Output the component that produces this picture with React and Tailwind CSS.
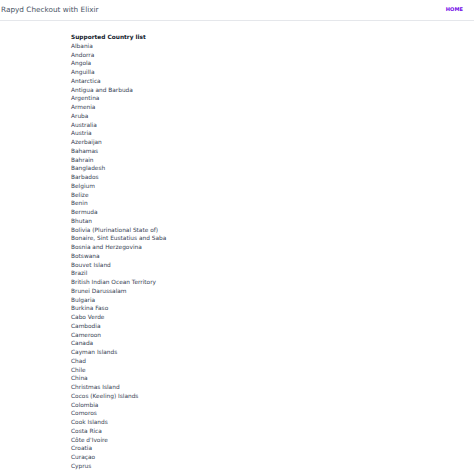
import React from "react";

const countries = [
  "Albania",
  "Andorra",
  "Angola",
  "Anguilla",
  "Antarctica",
  "Antigua and Barbuda",
  "Argentina",
  "Armenia",
  "Aruba",
  "Australia",
  "Austria",
  "Azerbaijan",
  "Bahamas",
  "Bahrain",
  "Bangladesh",
  "Barbados",
  "Belgium",
  "Belize",
  "Benin",
  "Bermuda",
  "Bhutan",
  "Bolivia (Plurinational State of)",
  "Bonaire, Sint Eustatius and Saba",
  "Bosnia and Herzegovina",
  "Botswana",
  "Bouvet Island",
  "Brazil",
  "British Indian Ocean Territory",
  "Brunei Darussalam",
  "Bulgaria",
  "Burkina Faso",
  "Cabo Verde",
  "Cambodia",
  "Cameroon",
  "Canada",
  "Cayman Islands",
  "Chad",
  "Chile",
  "China",
  "Christmas Island",
  "Cocos (Keeling) Islands",
  "Colombia",
  "Comoros",
  "Cook Islands",
  "Costa Rica",
  "Côte d'Ivoire",
  "Croatia",
  "Curaçao",
  "Cyprus",
];

export default function App() {
  return (
    <div className="h-screen overflow-hidden bg-white font-['DejaVu_Sans',sans-serif]">
      <header className="h-[21px] flex items-center justify-between border-b border-gray-200 pl-[1px] pr-[11px]">
        <span className="text-[7.3px] leading-none text-gray-600">
          Rapyd Checkout with Elixir
        </span>
        <a className="text-[5.1px] leading-none font-bold text-violet-700">
          HOME
        </a>
      </header>
      <main className="pl-[71px] pt-[12px] text-[5.83px] leading-[8.75px]">
        <h2 className="font-bold text-gray-900">Supported Country list</h2>
        <ul className="text-gray-700">
          {countries.map((c) => (
            <li key={c}>{c}</li>
          ))}
        </ul>
      </main>
    </div>
  );
}
